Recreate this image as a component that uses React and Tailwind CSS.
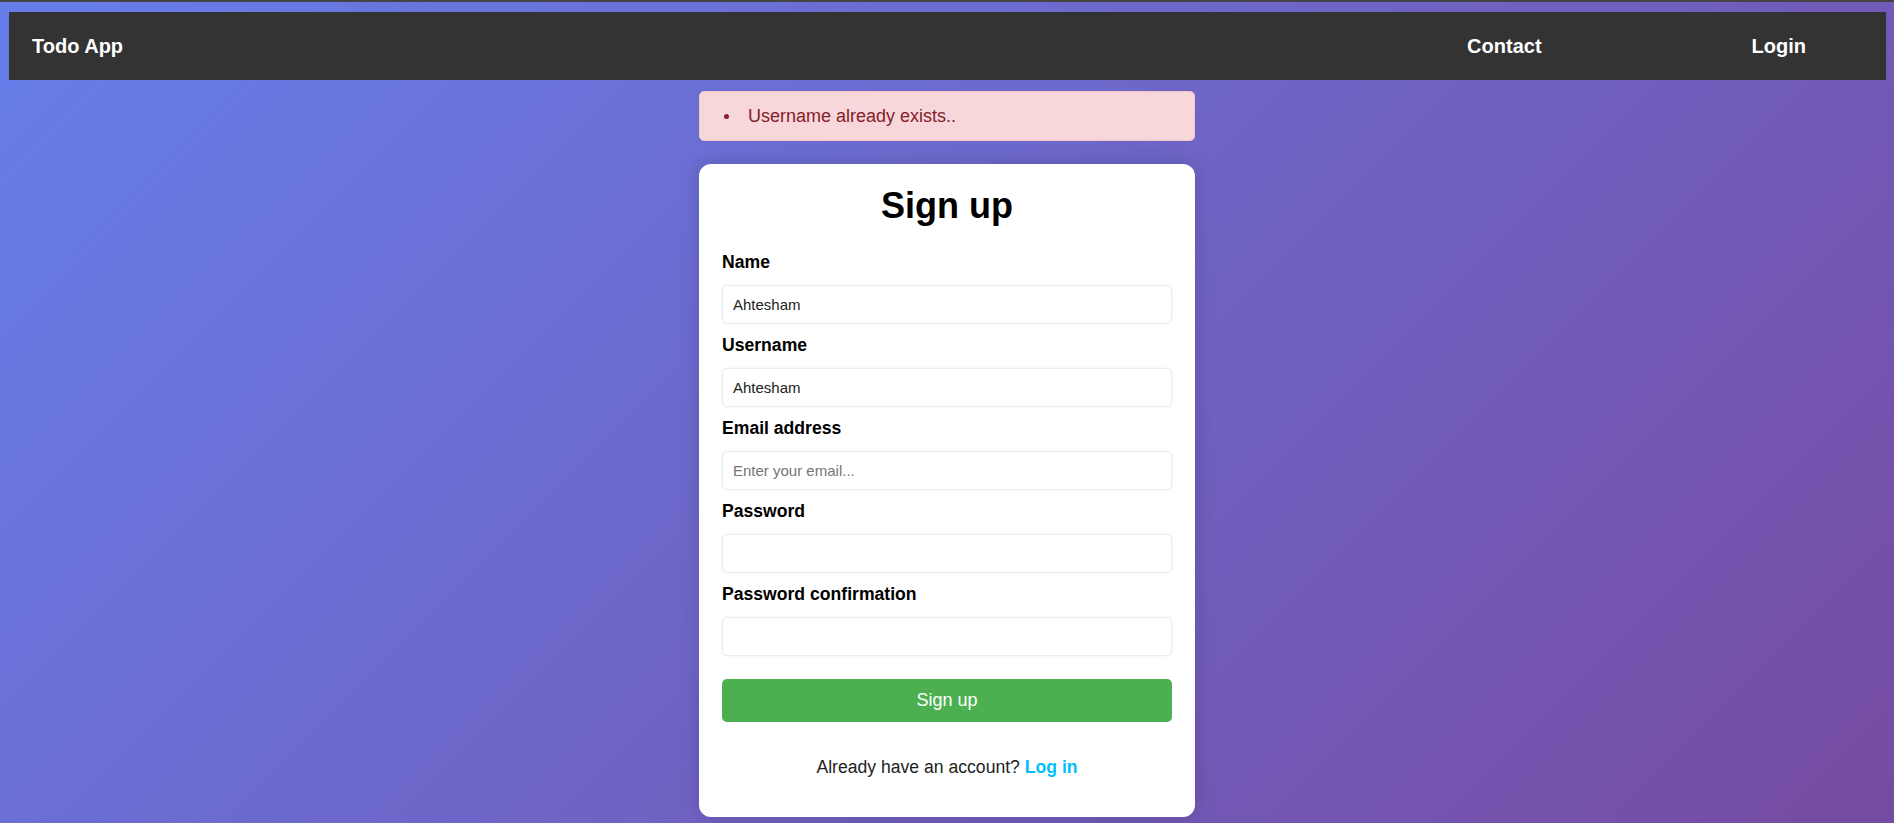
import { useState } from "react";

const fields = [
  { id: "name", label: "Name", type: "text", value: "Ahtesham" },
  { id: "username", label: "Username", type: "text", value: "Ahtesham" },
  { id: "email", label: "Email address", type: "email", value: "", placeholder: "Enter your email..." },
  { id: "password", label: "Password", type: "password", value: "" },
  { id: "password_confirmation", label: "Password confirmation", type: "password", value: "" }
];

function Navbar() {
  return (
    <nav className="mx-[8px] ml-[9px] mt-[10px] flex h-[68px] items-center justify-between bg-[#333] pl-[23px] pr-[80px] text-[20px] font-bold text-white">
      <a href="#" className="leading-6">Todo App</a>
      <ul className="flex items-center gap-[210px]">
        <li>
          <a href="#" className="leading-6">Contact</a>
        </li>
        <li>
          <a href="#" className="leading-6">Login</a>
        </li>
      </ul>
    </nav>
  );
}

export default function App() {
  const [form, setForm] = useState(() =>
    Object.fromEntries(fields.map((field) => [field.id, field.value]))
  );

  function handleSubmit(event) {
    event.preventDefault();
  }

  return (
    <div className="min-h-screen bg-[linear-gradient(135deg,#667eea_0%,#764ba2_100%)] font-['Liberation_Sans',Arial,sans-serif]">
      <div className="h-[2px] bg-[#444]" />
      <Navbar />

      <div className="mx-auto mt-[11px] w-[496px]">
        <div className="rounded-[5px] border border-[#f5c2c7] bg-[#f8d7da] px-4 py-3 text-[18px] leading-6 text-[#842029]">
          <ul>
            <li className="flex items-center">
              <span className="ml-[8px] mr-[19px] h-[5px] w-[5px] rounded-full bg-[#842029]" />
              Username already exists..
            </li>
          </ul>
        </div>

        <div className="mt-[23px] rounded-[12px] bg-white px-[23px] pb-[40px] pt-[20px] shadow-[0_0_20px_rgba(0,0,0,0.15)]">
          <h2 className="text-center text-[36px] font-bold leading-[44px] text-black">Sign up</h2>

          <form className="mt-[24px]" onSubmit={handleSubmit}>
            {fields.map((field) => (
              <div key={field.id} className="mb-[11px]">
                <label htmlFor={field.id} className="block text-[17.6px] font-bold leading-5 text-black">
                  {field.label}
                </label>
                <input
                  id={field.id}
                  type={field.type}
                  value={form[field.id]}
                  placeholder={field.placeholder}
                  onChange={(event) => setForm((current) => ({ ...current, [field.id]: event.target.value }))}
                  className="mt-[13px] block h-[39px] w-full rounded-[5px] border border-[#ececec] bg-white pl-[10px] text-[15px] text-[#222] shadow-[0_0_3px_rgba(0,0,0,0.06)] outline-none placeholder:text-[#757575]"
                />
              </div>
            ))}

            <button
              type="submit"
              className="mt-[23px] block h-[43px] w-full rounded-[5px] bg-[#4caf50] text-[18px] text-white"
            >
              Sign up
            </button>
          </form>

          <p className="mt-[35px] text-center text-[17.6px] leading-5 text-[#222]">
            Already have an account?{" "}
            <a href="#" className="font-bold text-[#00bfff]">
              Log in
            </a>
          </p>
        </div>
      </div>
    </div>
  );
}
